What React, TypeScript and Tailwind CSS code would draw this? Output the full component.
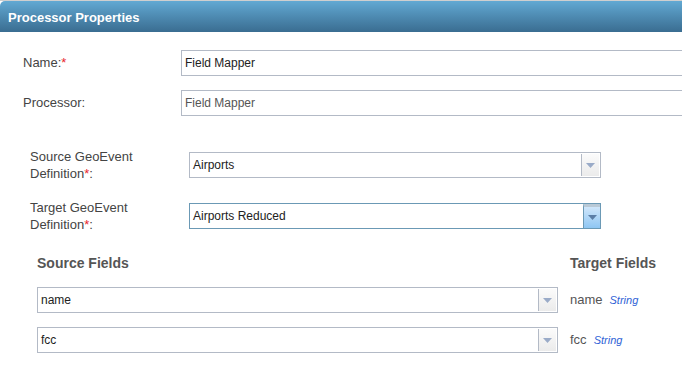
import type { ReactNode } from 'react';

function Req() {
  return <span className="text-[#e8262b]">*</span>;
}

function Arrow({ color }: { color: string }) {
  return (
    <svg width="9" height="5" viewBox="0 0 9 5" aria-hidden="true">
      <polygon points="0,0 9,0 4.5,5" fill={color} />
    </svg>
  );
}

function TextBox({ value, dim }: { value: string; dim?: boolean }) {
  return (
    <div
      className={`h-[26px] w-[520px] shrink-0 border border-[#b3bac6] bg-white flex items-center pl-[3px] text-[12px] ${
        dim ? 'text-[#555]' : 'text-[#222]'
      }`}
    >
      {value}
    </div>
  );
}

function Select({ value, active, width }: { value: string; active?: boolean; width: string }) {
  return (
    <div
      className={`h-[26px] ${width} shrink-0 flex border bg-white ${
        active ? 'border-[#6b99b5]' : 'border-[#b3bac6]'
      }`}
    >
      <div className="flex-1 flex items-center pl-[3px] text-[12px] text-[#222]">{value}</div>
      {active ? (
        <div className="w-[17px] border-l border-[#6b99b5] border-t-[3px] border-t-[#b9c9d6] bg-gradient-to-b from-[#cfe6fa] to-[#8ec6f3] flex items-center justify-center">
          <Arrow color="#5b7ea6" />
        </div>
      ) : (
        <div className="w-[18px] border-l border-[#b3bac6] m-[1px] ml-0 bg-gradient-to-b from-[#fbfbfb] to-[#ebebeb] flex items-center justify-center">
          <Arrow color="#9aabc8" />
        </div>
      )}
    </div>
  );
}

function Row({ label, children, className }: { label: ReactNode; children: ReactNode; className: string }) {
  return (
    <div className={`flex items-center ${className}`}>
      {label}
      {children}
    </div>
  );
}

export default function App() {
  return (
    <div
      className="w-[682px] h-[373px] bg-white overflow-hidden text-[#444]"
      style={{ fontFamily: '"Liberation Sans", Arial, sans-serif' }}
    >
      <div className="border-t border-[#cfcfcf]">
        <div className="h-[31px] rounded-tl-[5px] bg-gradient-to-b from-[#62a9d3] to-[#3a6d91] flex items-center pl-[8px] pt-[2px] text-white font-bold text-[13px]">
          Processor Properties
        </div>
      </div>

      <Row className="mt-[18px] pl-[23px]" label={<div className="w-[158px] shrink-0 text-[13px]">Name:<Req /></div>}>
        <TextBox value="Field Mapper" />
      </Row>

      <Row className="mt-[14px] pl-[23px]" label={<div className="w-[158px] shrink-0 text-[13px]">Processor:</div>}>
        <TextBox value="Field Mapper" dim />
      </Row>

      <Row
        className="mt-[32px] pl-[30px]"
        label={
          <div className="w-[159px] shrink-0 text-[13px] leading-[17px]">
            Source GeoEvent
            <br />
            Definition<Req />:
          </div>
        }
      >
        <Select value="Airports" width="w-[412px]" />
      </Row>

      <Row
        className="mt-[17px] pl-[30px]"
        label={
          <div className="w-[159px] shrink-0 text-[13px] leading-[17px]">
            Target GeoEvent
            <br />
            Definition<Req />:
          </div>
        }
      >
        <Select value="Airports Reduced" width="w-[412px]" active />
      </Row>

      <div className="mt-[20px] pl-[37px] flex text-[14px] leading-[20px] font-bold text-[#555]">
        <div className="w-[533px] shrink-0">Source Fields</div>
        <div>Target Fields</div>
      </div>

      <div className="mt-[14px] pl-[37px] flex flex-col gap-[14px]">
        {[{ name: 'name' }, { name: 'fcc' }].map((f) => (
          <div key={f.name} className="flex items-center">
            <Select value={f.name} width="w-[521px]" />
            <div className="ml-[12px] text-[13px] text-[#555] whitespace-nowrap">
              {f.name}
              <span className="ml-[7px] text-[11px] italic text-[#2f62d6]">String</span>
            </div>
          </div>
        ))}
      </div>
    </div>
  );
}
